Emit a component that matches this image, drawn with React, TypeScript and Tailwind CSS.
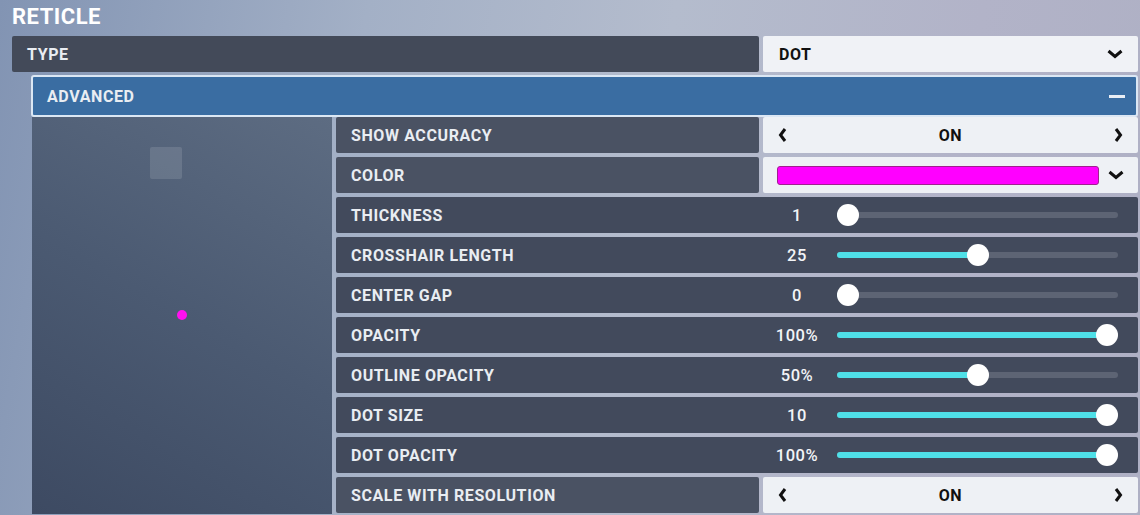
import React from "react";

const Chevron = ({ dir }: { dir: "down" | "left" | "right" }) => {
  if (dir === "down")
    return (
      <svg width="16" height="10" viewBox="0 0 16 10">
        <path d="M1.5 2 L8 7.5 L14.5 2" fill="none" stroke="#111" strokeWidth="3" strokeLinejoin="miter" />
      </svg>
    );
  if (dir === "left")
    return (
      <svg width="9" height="16" viewBox="0 0 9 16">
        <path d="M7 2 L2.5 8 L7 14" fill="none" stroke="#111" strokeWidth="3" />
      </svg>
    );
  return (
    <svg width="9" height="16" viewBox="0 0 9 16">
      <path d="M2 2 L6.5 8 L2 14" fill="none" stroke="#111" strokeWidth="3" />
    </svg>
  );
};

const Label = ({ children }: { children: React.ReactNode }) => (
  <span className="text-[16px] font-bold tracking-[0.6px] text-[#e9edf2] font-['Roboto',sans-serif]">{children}</span>
);

const Toggle = ({ label }: { label: string }) => (
  <div className="flex h-9 gap-1">
    <div className="flex flex-1 items-center rounded-[2px] bg-[#4a5263] pl-[15px] pt-[2px]">
      <Label>{label}</Label>
    </div>
    <div className="flex w-[375px] items-center justify-between rounded-[2px] bg-[#eef1f5] px-[15px]">
      <Chevron dir="left" />
      <span className="pt-[2px] text-[16px] font-bold tracking-[0.5px] text-[#111] font-['Roboto',sans-serif]">ON</span>
      <Chevron dir="right" />
    </div>
  </div>
);

const Slider = ({ label, value, frac }: { label: string; value: string; frac: number }) => {
  const range = 259;
  const center = 11 + frac * range;
  return (
    <div className="flex h-9 items-center rounded-[2px] bg-[#424a5c] pl-[15px]">
      <div className="w-[411px] pt-[2px]">
        <Label>{label}</Label>
      </div>
      <div className="flex w-[70px] justify-center pt-[2px]">
        <span className="text-[16.5px] font-medium tracking-[0.5px] text-[#f2f4f7] font-['Roboto',sans-serif]">{value}</span>
      </div>
      <div className="relative ml-[5px] h-[22px] w-[281px]">
        <div className="absolute left-0 right-0 top-[8px] h-[6px] rounded-full bg-[#5d6474]" />
        <div className="absolute left-0 top-[8px] h-[6px] rounded-full bg-[#4fe0e8]" style={{ width: center }} />
        <div className="absolute top-0 h-[22px] w-[22px] rounded-full bg-white" style={{ left: center - 11 }} />
      </div>
    </div>
  );
};

export default function App() {
  return (
    <div className="relative h-[515px] w-[1140px] overflow-hidden bg-[linear-gradient(100deg,#8294b3_0%,#a3b0c6_30%,#b4bccd_55%,#b2b3c8_80%,#aeb0c4_100%)] pl-3 pr-[2px] font-['Roboto',sans-serif]">
      <div className="flex h-9 items-start">
        <span className="text-[22px] font-bold tracking-[0.5px] text-white">RETICLE</span>
      </div>
      <div className="flex h-9 gap-1">
        <div className="flex flex-1 items-center rounded-[2px] bg-[#434a59] pl-[15px] pt-[2px]">
          <Label>TYPE</Label>
        </div>
        <div className="flex w-[375px] items-center justify-between rounded-[2px] bg-[#f0f2f6] pl-[16px] pr-[15px]">
          <span className="pt-[2px] text-[16px] font-bold tracking-[0.5px] text-[#111]">DOT</span>
          <Chevron dir="down" />
        </div>
      </div>
      <div className="ml-[19px] mt-[3px]">
        <div className="flex h-[42px] items-center justify-between rounded-[3px] border-2 border-[#dbe7f4] bg-[#3a6da2] pl-[14px] pr-[11px]">
          <span className="pt-[2px]">
            <Label>ADVANCED</Label>
          </span>
          <div className="h-[3px] w-[16px] bg-[#e9eef5]" />
        </div>
        <div className="flex gap-1">
          <div className="relative ml-[1px] h-[397px] w-[300px] bg-[linear-gradient(30deg,#3d4a62_0%,#4b5a72_50%,#5d6c82_100%)]">
            <div className="absolute left-[118px] top-[30px] h-8 w-8 rounded-[2px] bg-[#ffffff1f]" />
            <div className="absolute left-[145px] top-[193px] h-[10px] w-[10px] rounded-full bg-[#ff10f0]" />
          </div>
          <div className="flex flex-1 flex-col gap-1">
            <Toggle label="SHOW ACCURACY" />
            <div className="flex h-9 gap-1">
              <div className="flex flex-1 items-center rounded-[2px] bg-[#4a5263] pl-[15px] pt-[2px]">
                <Label>COLOR</Label>
              </div>
              <div className="flex w-[375px] items-center rounded-[2px] bg-[#eef1f5] pl-[14px] pr-[14px]">
                <div className="h-[19px] w-[322px] rounded-[3px] border border-[#a0208f] bg-[#ff00ff]" />
                <div className="ml-auto">
                  <Chevron dir="down" />
                </div>
              </div>
            </div>
            <Slider label="THICKNESS" value="1" frac={0} />
            <Slider label="CROSSHAIR LENGTH" value="25" frac={0.5} />
            <Slider label="CENTER GAP" value="0" frac={0} />
            <Slider label="OPACITY" value="100%" frac={1} />
            <Slider label="OUTLINE OPACITY" value="50%" frac={0.5} />
            <Slider label="DOT SIZE" value="10" frac={1} />
            <Slider label="DOT OPACITY" value="100%" frac={1} />
            <Toggle label="SCALE WITH RESOLUTION" />
          </div>
        </div>
      </div>
    </div>
  );
}
